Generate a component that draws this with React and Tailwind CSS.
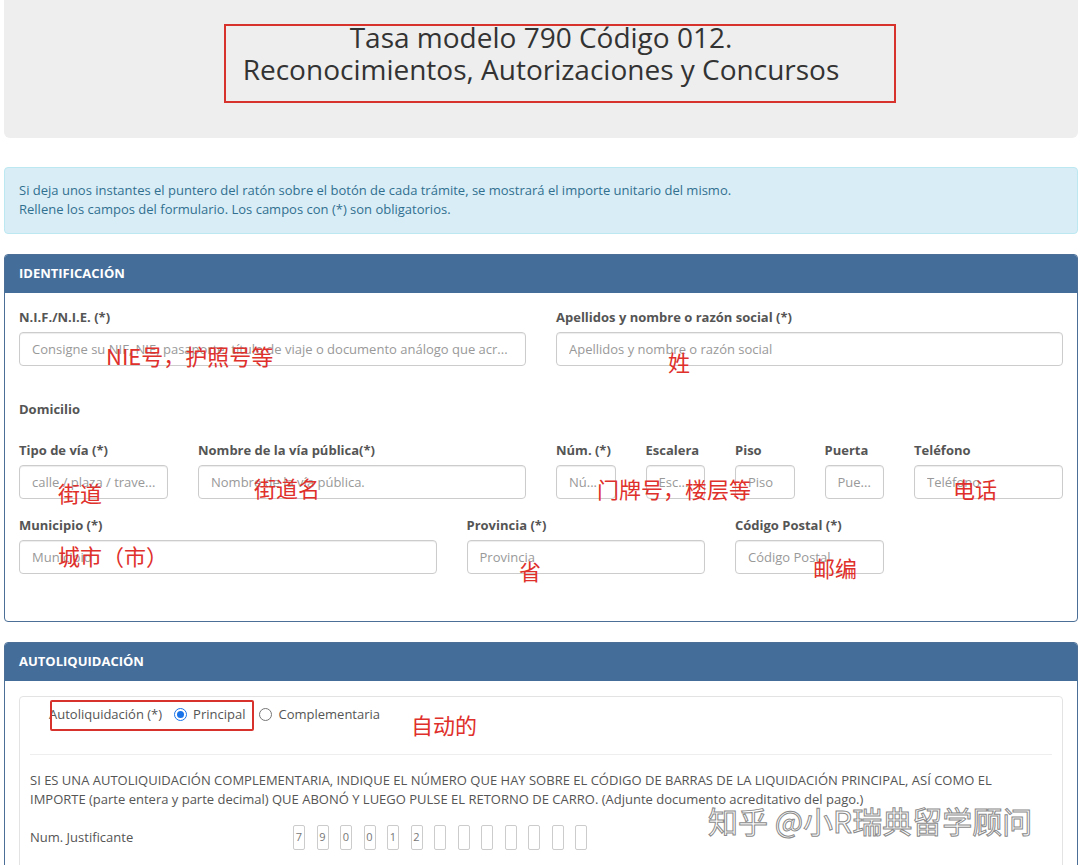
import React from 'react';

const FONT = "font-['Open_Sans','Noto_Sans_CJK_SC',sans-serif]";

// filas del bloque de identificación (rejilla de 12 columnas)
const domicilio = [
  { label: 'Tipo de vía (*)', placeholder: 'calle / plaza / trave...', span: 'col-span-2' },
  { label: 'Nombre de la vía pública(*)', placeholder: 'Nombre de la vía pública.', span: 'col-span-4' },
  { label: 'Núm. (*)', placeholder: 'Nú...', span: 'col-span-1' },
  { label: 'Escalera', placeholder: 'Esc...', span: 'col-span-1' },
  { label: 'Piso', placeholder: 'Piso', span: 'col-span-1' },
  { label: 'Puerta', placeholder: 'Pue...', span: 'col-span-1' },
  { label: 'Teléfono', placeholder: 'Teléfono', span: 'col-span-2' },
];

const localidad = [
  { label: 'Municipio (*)', placeholder: 'Municipio', span: 'col-span-5' },
  { label: 'Provincia (*)', placeholder: 'Provincia', span: 'col-span-3' },
  { label: 'Código Postal (*)', placeholder: 'Código Postal', span: 'col-span-2' },
];

// notas a mano en rojo sobre el formulario
const notas = [
  { text: 'NIE号，护照号等', cls: 'left-[106px] top-[344px]' },
  { text: '姓', cls: 'left-[668px] top-[350px]' },
  { text: '街道', cls: 'left-[58px] top-[481px]' },
  { text: '街道名', cls: 'left-[254px] top-[476px]' },
  { text: '门牌号，楼层等', cls: 'left-[597px] top-[477px]' },
  { text: '电话', cls: 'left-[953px] top-[477px]' },
  { text: '城市（市）', cls: 'left-[58px] top-[544px]' },
  { text: '省', cls: 'left-[519px] top-[559px]' },
  { text: '邮编', cls: 'left-[813px] top-[556px]' },
  { text: '自动的', cls: 'left-[411px] top-[713px]' },
];

const justificante = ['7', '9', '0', '0', '1', '2', '', '', '', '', '', '', ''];

function Field({ label, placeholder, span }) {
  return (
    <div className={span}>
      <label className="mb-[6px] block text-[13px] font-bold leading-[17px] text-[#555]">{label}</label>
      <input
        readOnly
        placeholder={placeholder}
        className="block h-[34px] w-full rounded-[4px] border border-[#ccc] bg-white px-[12px] text-[13px] text-[#555] shadow-[inset_0_1px_1px_rgba(0,0,0,0.075)] outline-none placeholder:text-[#999]"
      />
    </div>
  );
}

function Panel({ title, children, className }) {
  return (
    <div className={`ml-[4px] mr-[2px] overflow-hidden rounded-[4px] border border-[#4b6f96] bg-white ${className}`}>
      <div className="flex h-[38px] items-center bg-[#456d99] px-[14px] text-[13px] font-bold text-white">{title}</div>
      {children}
    </div>
  );
}

function Radio({ checked, label }) {
  return (
    <span className="flex items-center gap-[6px]">
      {checked ? (
        <span className="flex h-[13px] w-[13px] items-center justify-center rounded-full border border-[#1a73e8]">
          <span className="h-[7px] w-[7px] rounded-full bg-[#1a73e8]" />
        </span>
      ) : (
        <span className="h-[13px] w-[13px] rounded-full border border-[#767676] bg-white" />
      )}
      <span>{label}</span>
    </span>
  );
}

export default function App() {
  return (
    <div className={`relative h-[865px] w-[1080px] overflow-hidden bg-white text-[#333] ${FONT}`}>
      {/* cabecera */}
      <div className="relative ml-[4px] mr-[2px] h-[138px] rounded-b-[6px] bg-[#eeeeee] pt-[21px]">
        <h1 className="text-center text-[28px] font-normal leading-[32px] text-[#333]">
          Tasa modelo 790 Código 012.
          <br />
          Reconocimientos, Autorizaciones y Concursos
        </h1>
        <div className="absolute left-[220px] top-[24px] h-[79px] w-[672px] border-2 border-[#d8322c]" />
      </div>

      {/* aviso */}
      <div className="ml-[4px] mr-[2px] mt-[29px] h-[67px] rounded-[4px] border border-[#bce8f1] bg-[#d9edf7] px-[14px] pt-[13px] text-[13px] leading-[19px] text-[#31708f]">
        <p>Si deja unos instantes el puntero del ratón sobre el botón de cada trámite, se mostrará el importe unitario del mismo.</p>
        <p>Rellene los campos del formulario. Los campos con (*) son obligatorios.</p>
      </div>

      <Panel title="IDENTIFICACIÓN" className="mt-[20px]">
        <div className="px-[14px] pb-[47px] pt-[16px]">
          <div className="grid grid-cols-12 gap-x-[30px]">
            <Field
              span="col-span-6"
              label="N.I.F./N.I.E. (*)"
              placeholder="Consigne su NIF, NIE, pasaporte, título de viaje o documento análogo que acr..."
            />
            <Field span="col-span-6" label="Apellidos y nombre o razón social (*)" placeholder="Apellidos y nombre o razón social" />
          </div>
          <div className="mt-[35px] text-[13px] font-bold leading-[17px] text-[#555]">Domicilio</div>
          <div className="mt-[24px] grid grid-cols-12 gap-x-[30px]">
            {domicilio.map(f => <Field key={f.label} {...f} />)}
          </div>
          <div className="mt-[18px] grid grid-cols-12 gap-x-[30px]">
            {localidad.map(f => <Field key={f.label} {...f} />)}
          </div>
        </div>
      </Panel>

      <Panel title="AUTOLIQUIDACIÓN" className="mt-[20px]">
        <div className="px-[14px] pb-[40px] pt-[15px]">
          <div className="rounded-[4px] border border-[#e3e3e3] px-[10px] pb-[30px] pt-[8px]">
            <div className="flex items-center pl-[19px] text-[13px] leading-[18px] text-[#555]">
              <span>Autoliquidación (*)</span>
              <span className="ml-[12px]"><Radio checked label="Principal" /></span>
              <span className="ml-[14px]"><Radio label="Complementaria" /></span>
            </div>
            <div className="mt-[31px] h-px bg-[#eee]" />
            <p className="mt-[16px] text-[13px] leading-[19px] text-[#555]">
              SI ES UNA AUTOLIQUIDACIÓN COMPLEMENTARIA, INDIQUE EL NÚMERO QUE HAY SOBRE EL CÓDIGO DE BARRAS DE LA LIQUIDACIÓN PRINCIPAL, ASÍ COMO EL
              <br />
              IMPORTE (parte entera y parte decimal) QUE ABONÓ Y LUEGO PULSE EL RETORNO DE CARRO. (Adjunte documento acreditativo del pago.)
            </p>
            <div className="mt-[16px] flex items-center">
              <span className="w-[263px] text-[13px] text-[#555]">Num. Justificante</span>
              <div className="flex gap-[11.5px]">
                {justificante.map((d, i) => (
                  <span
                    key={i}
                    className="flex h-[25px] w-[12px] items-center justify-center overflow-hidden rounded-[2px] border border-[#ccc] bg-white text-[11px] text-[#777]"
                  >
                    {d}
                  </span>
                ))}
              </div>
            </div>
            <div className="h-[60px]" />
          </div>
        </div>
      </Panel>

      {/* anotaciones */}
      {notas.map(n => (
        <span
          key={n.text}
          className={`absolute whitespace-nowrap text-[22px] leading-none text-[#e0302b] font-['Noto_Sans_CJK_SC',sans-serif] ${n.cls}`}
        >
          {n.text}
        </span>
      ))}
      <div className="absolute left-[50px] top-[700px] h-[31px] w-[204px] rounded-[2px] border-2 border-[#d8322c]" />

      <span className="absolute left-[708px] top-[805px] whitespace-nowrap text-[30px] leading-none text-white/80 [-webkit-text-stroke:1px_#8a8a8a] font-['Noto_Sans_CJK_SC',sans-serif]">
        知乎 @小R瑞典留学顾问
      </span>
    </div>
  );
}
